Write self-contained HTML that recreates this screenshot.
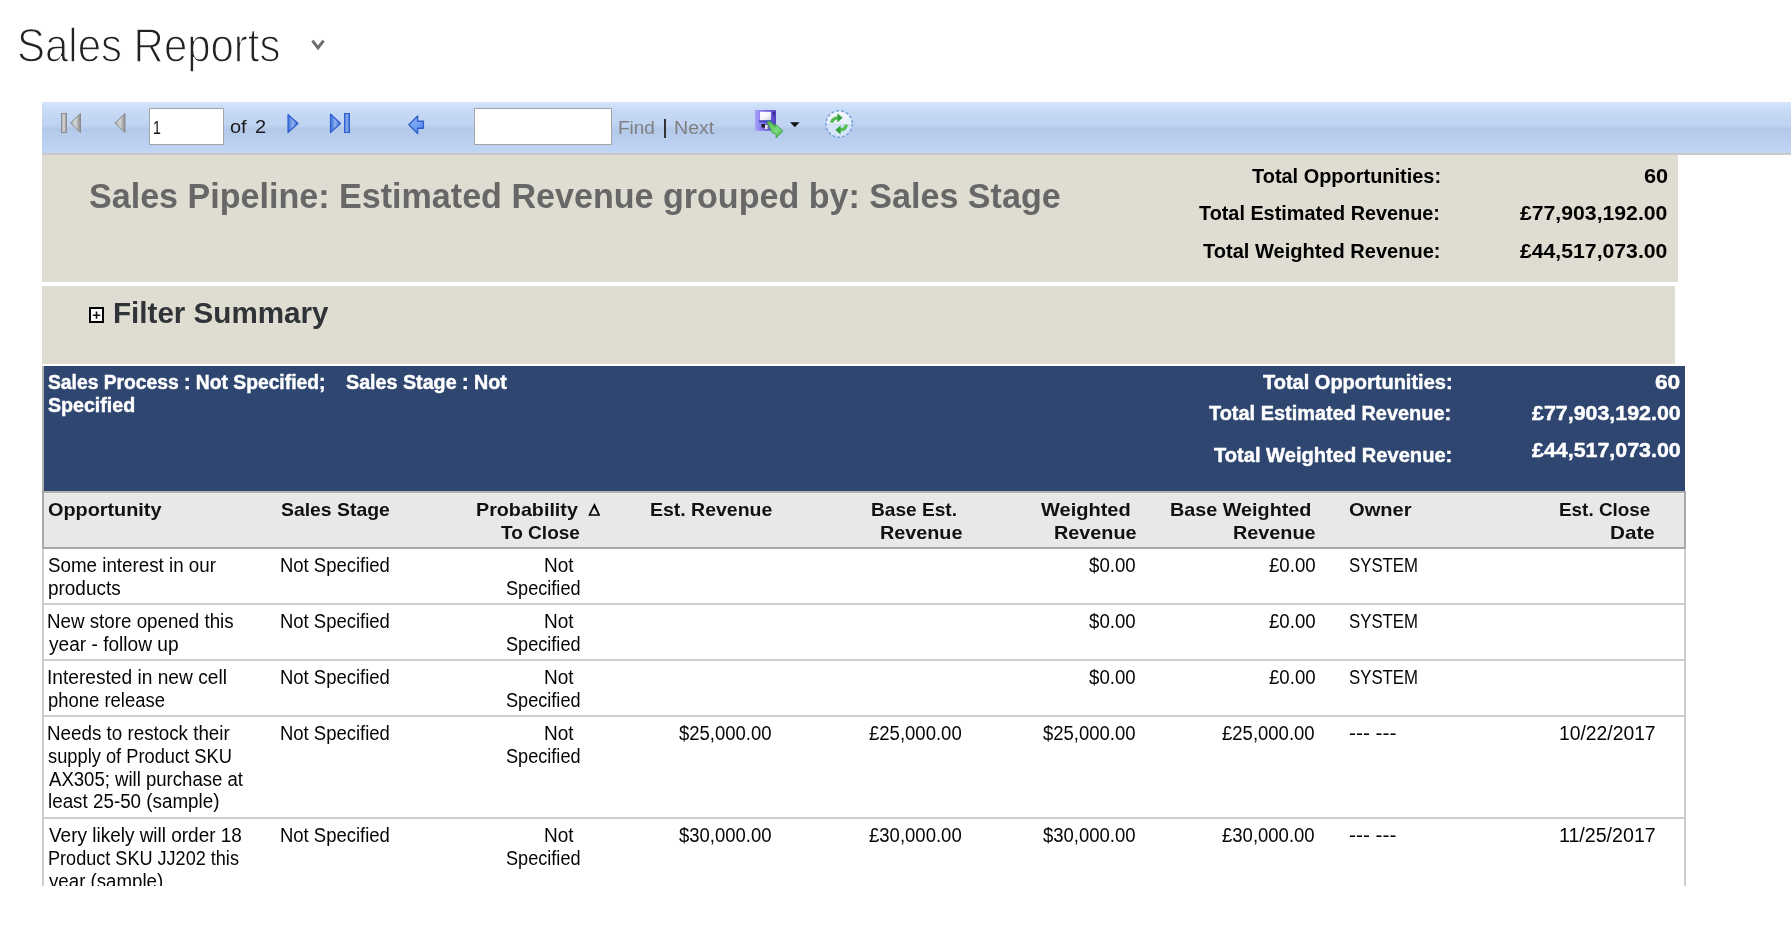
<!DOCTYPE html>
<html><head><meta charset="utf-8">
<style>
html,body{margin:0;padding:0;background:#fff;width:1791px;height:936px;overflow:hidden;position:relative;font-family:"Liberation Sans",sans-serif;}
.a{position:absolute;}
.t{position:absolute;white-space:pre;line-height:1;}
svg{display:block;}
</style></head><body><div class="a" style="left:0;top:0;width:1791px;height:936px;overflow:hidden;will-change:transform;">
<div class="t" style="top:20.77px;font-size:48.5px;color:#222;left:17.45px;transform:scaleX(0.8649);transform-origin:0 0;-webkit-text-stroke:1.4px #fff;">Sales Reports</div>
<svg class="a" style="left:309px;top:37px" width="18" height="16" viewBox="0 0 18 16"><path d="M3.4 3.6 L9 10.8 L14.6 3.6" fill="none" stroke="#6b6b6b" stroke-width="3"/></svg>
<div class="a" style="left:42px;top:102px;width:1749px;height:51px;background:linear-gradient(#d4e5fc 0%,#c6daf6 18%,#bfd3f2 45%,#b9cdee 49%,#b3c8e8 54%,#b6cbec 60%,#bacff0 75%,#c1d6f5 100%);"></div>
<div class="a" style="left:42px;top:153px;width:1749px;height:2px;background:#c8c8c8;"></div>
<svg class="a" style="left:55px;top:108px" width="100" height="32" viewBox="0 0 100 32"><defs><linearGradient id="gg" x1="0" y1="0" x2="1" y2="0"><stop offset="0" stop-color="#a8a8a8"/><stop offset="0.5" stop-color="#d6d6d6"/><stop offset="1" stop-color="#8a8a8a"/></linearGradient></defs><rect x="6.5" y="5.5" width="5" height="19" fill="url(#gg)" stroke="#8c8c8c" stroke-width="1"/><path d="M25.5 5.5 L15.5 15 L25.5 24.5 Z" fill="url(#gg)" stroke="#8c8c8c" stroke-width="1" stroke-linejoin="round"/><path d="M70 5.5 L60 15 L70 24.5 Z" fill="url(#gg)" stroke="#8c8c8c" stroke-width="1" stroke-linejoin="round"/></svg>
<div class="a" style="left:149px;top:108px;width:73px;height:34.5px;background:#fff;border:1px solid #a5a5a5;box-sizing:content-box;"></div>
<div class="t" style="top:118.58px;font-size:18.5px;color:#111;left:152.65px;transform:scaleX(0.7625);transform-origin:0 0;">1</div>
<div class="t" style="top:118.47px;font-size:18.5px;color:#1a1a1a;left:230.49px;transform:scaleX(1.0780);transform-origin:0 0;">of</div>
<div class="t" style="top:118.47px;font-size:18.5px;color:#1a1a1a;left:254.65px;transform:scaleX(1.0824);transform-origin:0 0;">2</div>
<svg class="a" style="left:280px;top:108px" width="160" height="32" viewBox="0 0 160 32"><defs><linearGradient id="ba" x1="0" y1="0" x2="1" y2="1"><stop offset="0" stop-color="#9bbcf5"/><stop offset="0.6" stop-color="#6e9cf2"/><stop offset="1" stop-color="#4a7ae0"/></linearGradient><linearGradient id="bg" x1="0" y1="0" x2="1" y2="0"><stop offset="0" stop-color="#3a6fd8"/><stop offset="0.5" stop-color="#8fb0f0"/><stop offset="1" stop-color="#2d5ec8"/></linearGradient></defs><path d="M8 6.5 L18 15.5 L8 24.5 Z" fill="url(#bg)" stroke="#2f5fd0" stroke-width="1.2" stroke-linejoin="round"/><path d="M50.5 6 L60.5 15.5 L50.5 24.5 Z" fill="url(#bg)" stroke="#2f5fd0" stroke-width="1.2" stroke-linejoin="round"/><rect x="64.5" y="5.5" width="5" height="19" fill="url(#bg)" stroke="#2f5fd0" stroke-width="1"/><path d="M128.9 16.75 L137.6 7.9 L137.6 13.2 L143.4 13.2 L143.4 20.2 L137.6 20.2 L137.6 25.6 Z" fill="url(#ba)" stroke="#3060c8" stroke-width="1.4" stroke-linejoin="round"/></svg>
<div class="a" style="left:474px;top:108px;width:136px;height:34.5px;background:#fff;border:1px solid #a5a5a5;"></div>
<div class="t" style="top:119.08px;font-size:18.5px;color:#808080;left:618.16px;transform:scaleX(1.0256);transform-origin:0 0;">Find</div>
<div class="a" style="left:664px;top:119px;width:2px;height:19px;background:#333;"></div>
<div class="t" style="top:119.08px;font-size:18.5px;color:#808080;left:673.91px;transform:scaleX(1.0584);transform-origin:0 0;">Next</div>
<svg class="a" style="left:750px;top:106px" width="60" height="36" viewBox="0 0 60 36"><defs><linearGradient id="fl" x1="0" y1="0" x2="1" y2="0"><stop offset="0" stop-color="#a8a2fa"/><stop offset="0.5" stop-color="#7668e0"/><stop offset="1" stop-color="#5040c0"/></linearGradient><linearGradient id="lb" x1="0" y1="0" x2="1" y2="1"><stop offset="0" stop-color="#ffffff"/><stop offset="0.6" stop-color="#f4f4f8"/><stop offset="1" stop-color="#c8c8d8"/></linearGradient><linearGradient id="gr" x1="0" y1="0" x2="1" y2="1"><stop offset="0" stop-color="#4fb84f"/><stop offset="0.6" stop-color="#7ddc7d"/><stop offset="1" stop-color="#3a9f3a"/></linearGradient></defs><rect x="5" y="3.9" width="21" height="20.9" rx="0.8" fill="url(#fl)"/><rect x="10" y="5.8" width="11" height="8.4" fill="url(#lb)"/><rect x="9" y="14.5" width="13" height="1.8" fill="#3a48b8"/><rect x="11.5" y="18" width="3.6" height="3.6" fill="#1e2030"/><rect x="15" y="19" width="2.6" height="4" fill="#e6e6ee"/><rect x="23" y="6" width="2" height="2.8" fill="#2e2a90"/><path d="M17.2 16 L19.8 15.2 L25.4 20.6 L25 17.8 L33 25.2 L26 32 L26.2 28.2 L22 26.5 Z" fill="url(#gr)" stroke="#3f9f45" stroke-width="0.9" stroke-linejoin="round"/><path d="M40 16.2 L49.6 16.2 L44.8 21.2 Z" fill="#111"/></svg>
<svg class="a" style="left:822px;top:107px" width="34" height="34" viewBox="0 0 34 34"><defs><linearGradient id="rc" x1="0" y1="0" x2="0" y2="1"><stop offset="0" stop-color="#f6f9fe"/><stop offset="0.5" stop-color="#e6eefb"/><stop offset="0.5" stop-color="#d0e1fa"/><stop offset="1" stop-color="#dce8fb"/></linearGradient></defs><circle cx="17.1" cy="17" r="13.2" fill="url(#rc)" stroke="#7ca2da" stroke-width="1.6" stroke-dasharray="3 1.9"/><path d="M9.6 15.8 Q10.4 10.9 16.2 10.8" fill="none" stroke="#52bb52" stroke-width="3.2"/><path d="M15.4 6.3 L20.6 10.8 L15.4 15.4 Z" fill="#34a03a"/><path d="M24.4 17.4 Q23.6 22.8 18 22.9" fill="none" stroke="#58c458" stroke-width="3.2"/><path d="M18.6 18.4 L13.3 22.9 L18.6 27.5 Z" fill="#34a03a"/></svg>
<div class="a" style="left:42px;top:155px;width:1636px;height:127px;background:#dfddd1;"></div>
<div class="t" style="top:178.25px;font-size:35px;color:#676767;font-weight:bold;left:88.73px;transform:scaleX(0.9738);transform-origin:0 0;">Sales Pipeline: Estimated Revenue grouped by: Sales Stage</div>
<div class="t" style="top:166.00px;font-size:20px;color:#000;font-weight:bold;left:1252.45px;transform:scaleX(0.9969);transform-origin:0 0;">Total Opportunities:</div>
<div class="t" style="top:203.00px;font-size:20px;color:#000;font-weight:bold;left:1199.25px;transform:scaleX(0.9914);transform-origin:0 0;">Total Estimated Revenue:</div>
<div class="t" style="top:241.00px;font-size:20px;color:#000;font-weight:bold;left:1203.25px;transform:scaleX(1.0018);transform-origin:0 0;">Total Weighted Revenue:</div>
<div class="t" style="top:166.00px;font-size:20px;color:#000;font-weight:bold;left:1643.69px;transform:scaleX(1.0861);transform-origin:0 0;">60</div>
<div class="t" style="top:203.00px;font-size:20px;color:#000;font-weight:bold;left:1520.33px;transform:scaleX(1.0601);transform-origin:0 0;">£77,903,192.00</div>
<div class="t" style="top:241.00px;font-size:20px;color:#000;font-weight:bold;left:1520.33px;transform:scaleX(1.0601);transform-origin:0 0;">£44,517,073.00</div>
<div class="a" style="left:42px;top:286px;width:1633px;height:78px;background:#dfddd1;"></div>
<div class="a" style="left:89px;top:307px;width:11px;height:12px;border:2px solid #000;background:#fff;"></div>
<svg class="a" style="left:89px;top:307px" width="16" height="16" viewBox="0 0 16 16"><path d="M3.8 8.2 H11.2 M7.5 4.5 V11.8" stroke="#111" stroke-width="1.6"/></svg>
<div class="t" style="top:299.15px;font-size:29px;color:#303338;font-weight:bold;left:112.56px;transform:scaleX(1.0211);transform-origin:0 0;">Filter Summary</div>
<div class="a" style="left:44px;top:366px;width:1641px;height:125px;background:#2e4670;"></div>
<div class="a" style="left:42px;top:366px;width:2px;height:125px;background:#adadad;"></div>
<div class="t" style="top:372.93px;font-size:19.5px;color:#fff;font-weight:bold;left:47.98px;transform:scaleX(0.9883);transform-origin:0 0;-webkit-text-stroke:0.45px #fff;">Sales Process : Not Specified;</div>
<div class="t" style="top:372.93px;font-size:19.5px;color:#fff;font-weight:bold;left:345.77px;transform:scaleX(1.0101);transform-origin:0 0;-webkit-text-stroke:0.45px #fff;">Sales Stage : Not</div>
<div class="t" style="top:395.93px;font-size:19.5px;color:#fff;font-weight:bold;left:47.97px;transform:scaleX(1.0053);transform-origin:0 0;-webkit-text-stroke:0.45px #fff;">Specified</div>
<div class="t" style="top:371.80px;font-size:20px;color:#fff;font-weight:bold;left:1263.25px;transform:scaleX(0.9996);transform-origin:0 0;-webkit-text-stroke:0.45px #fff;">Total Opportunities:</div>
<div class="t" style="top:402.60px;font-size:20px;color:#fff;font-weight:bold;left:1209.25px;transform:scaleX(0.9964);transform-origin:0 0;-webkit-text-stroke:0.45px #fff;">Total Estimated Revenue:</div>
<div class="t" style="top:444.80px;font-size:20px;color:#fff;font-weight:bold;left:1213.95px;transform:scaleX(1.0052);transform-origin:0 0;-webkit-text-stroke:0.45px #fff;">Total Weighted Revenue:</div>
<div class="t" style="top:371.70px;font-size:20px;color:#fff;font-weight:bold;left:1655.15px;transform:scaleX(1.1345);transform-origin:0 0;-webkit-text-stroke:0.45px #fff;">60</div>
<div class="t" style="top:402.75px;font-size:20px;color:#fff;font-weight:bold;left:1531.53px;transform:scaleX(1.0696);transform-origin:0 0;-webkit-text-stroke:0.45px #fff;">£77,903,192.00</div>
<div class="t" style="top:439.80px;font-size:20px;color:#fff;font-weight:bold;left:1531.53px;transform:scaleX(1.0696);transform-origin:0 0;-webkit-text-stroke:0.45px #fff;">£44,517,073.00</div>
<div class="a" style="left:42px;top:491px;width:1644px;height:58px;background:#e8e8e8;"></div>
<div class="a" style="left:44px;top:493px;width:1640px;height:1px;background:#efefef;"></div>
<div class="a" style="left:42px;top:491px;width:1644px;height:2px;background:#b0b0b0;"></div>
<div class="a" style="left:42px;top:547px;width:1644px;height:2px;background:#a8a8a8;"></div>
<div class="a" style="left:42px;top:491px;width:2px;height:58px;background:#a8a8a8;"></div>
<div class="a" style="left:1684px;top:491px;width:2px;height:58px;background:#a8a8a8;"></div>
<div class="t" style="top:499.85px;font-size:19px;color:#111;font-weight:bold;left:48.22px;transform:scaleX(1.0438);transform-origin:0 0;">Opportunity</div>
<div class="t" style="top:499.85px;font-size:19px;color:#111;font-weight:bold;left:280.56px;transform:scaleX(1.0202);transform-origin:0 0;">Sales Stage</div>
<div class="t" style="top:499.85px;font-size:19px;color:#111;font-weight:bold;left:475.50px;transform:scaleX(1.0374);transform-origin:0 0;">Probability</div>
<div class="t" style="top:522.85px;font-size:19px;color:#111;font-weight:bold;left:501.05px;transform:scaleX(1.0016);transform-origin:0 0;">To Close</div>
<svg class="a" style="left:587px;top:502px" width="15" height="15" viewBox="0 0 15 15"><path fill-rule="evenodd" d="M7.5 0.9 L13.3 13.7 L1.2 13.7 Z M7.1 5.4 L3.8 12.3 L10.9 12.3 Z" fill="#000"/></svg>
<div class="t" style="top:499.85px;font-size:19px;color:#111;font-weight:bold;left:649.72px;transform:scaleX(1.0249);transform-origin:0 0;">Est. Revenue</div>
<div class="t" style="top:499.85px;font-size:19px;color:#111;font-weight:bold;left:870.94px;transform:scaleX(1.0048);transform-origin:0 0;">Base Est.</div>
<div class="t" style="top:522.85px;font-size:19px;color:#111;font-weight:bold;left:879.90px;transform:scaleX(1.0408);transform-origin:0 0;">Revenue</div>
<div class="t" style="top:499.85px;font-size:19px;color:#111;font-weight:bold;left:1041.00px;transform:scaleX(1.0539);transform-origin:0 0;">Weighted</div>
<div class="t" style="top:522.85px;font-size:19px;color:#111;font-weight:bold;left:1053.70px;transform:scaleX(1.0421);transform-origin:0 0;">Revenue</div>
<div class="t" style="top:499.85px;font-size:19px;color:#111;font-weight:bold;left:1170.30px;transform:scaleX(1.0407);transform-origin:0 0;">Base Weighted</div>
<div class="t" style="top:522.85px;font-size:19px;color:#111;font-weight:bold;left:1232.70px;transform:scaleX(1.0421);transform-origin:0 0;">Revenue</div>
<div class="t" style="top:499.85px;font-size:19px;color:#111;font-weight:bold;left:1349.41px;transform:scaleX(1.0581);transform-origin:0 0;">Owner</div>
<div class="t" style="top:499.85px;font-size:19px;color:#111;font-weight:bold;left:1558.56px;transform:scaleX(0.9944);transform-origin:0 0;">Est. Close</div>
<div class="t" style="top:522.85px;font-size:19px;color:#111;font-weight:bold;left:1610.14px;transform:scaleX(1.0879);transform-origin:0 0;">Date</div>
<div class="a" style="left:0;top:549px;width:1791px;height:337px;overflow:hidden;">
<div class="t" style="top:6.94px;font-size:19.6px;color:#050505;left:48.16px;transform:scaleX(0.9578);transform-origin:0 0;">Some interest in our</div>
<div class="t" style="top:29.74px;font-size:19.6px;color:#050505;left:47.79px;transform:scaleX(0.9666);transform-origin:0 0;">products</div>
<div class="t" style="top:6.94px;font-size:19.6px;color:#050505;left:279.67px;transform:scaleX(0.9426);transform-origin:0 0;">Not Specified</div>
<div class="t" style="top:6.94px;font-size:19.6px;color:#050505;left:544.02px;transform:scaleX(0.9704);transform-origin:0 0;">Not</div>
<div class="t" style="top:29.74px;font-size:19.6px;color:#050505;left:505.69px;transform:scaleX(0.9248);transform-origin:0 0;">Specified</div>
<div class="t" style="top:6.94px;font-size:19.6px;color:#050505;left:1089.46px;transform:scaleX(0.9521);transform-origin:0 0;">$0.00</div>
<div class="t" style="top:6.94px;font-size:19.6px;color:#050505;left:1268.52px;transform:scaleX(0.9508);transform-origin:0 0;">£0.00</div>
<div class="t" style="top:6.94px;font-size:19.6px;color:#050505;left:1348.85px;transform:scaleX(0.8563);transform-origin:0 0;">SYSTEM</div>
<div class="a" style="left:42px;top:54px;width:1644px;height:2px;background:#cecece;"></div>
<div class="t" style="top:62.94px;font-size:19.6px;color:#050505;left:47.44px;transform:scaleX(0.9573);transform-origin:0 0;">New store opened this</div>
<div class="t" style="top:85.74px;font-size:19.6px;color:#050505;left:48.88px;transform:scaleX(0.9750);transform-origin:0 0;">year - follow up</div>
<div class="t" style="top:62.94px;font-size:19.6px;color:#050505;left:279.67px;transform:scaleX(0.9426);transform-origin:0 0;">Not Specified</div>
<div class="t" style="top:62.94px;font-size:19.6px;color:#050505;left:544.02px;transform:scaleX(0.9704);transform-origin:0 0;">Not</div>
<div class="t" style="top:85.74px;font-size:19.6px;color:#050505;left:505.69px;transform:scaleX(0.9248);transform-origin:0 0;">Specified</div>
<div class="t" style="top:62.94px;font-size:19.6px;color:#050505;left:1089.46px;transform:scaleX(0.9521);transform-origin:0 0;">$0.00</div>
<div class="t" style="top:62.94px;font-size:19.6px;color:#050505;left:1268.52px;transform:scaleX(0.9508);transform-origin:0 0;">£0.00</div>
<div class="t" style="top:62.94px;font-size:19.6px;color:#050505;left:1348.85px;transform:scaleX(0.8563);transform-origin:0 0;">SYSTEM</div>
<div class="a" style="left:42px;top:110px;width:1644px;height:2px;background:#cecece;"></div>
<div class="t" style="top:118.94px;font-size:19.6px;color:#050505;left:47.29px;transform:scaleX(0.9773);transform-origin:0 0;">Interested in new cell</div>
<div class="t" style="top:141.74px;font-size:19.6px;color:#050505;left:47.82px;transform:scaleX(0.9417);transform-origin:0 0;">phone release</div>
<div class="t" style="top:118.94px;font-size:19.6px;color:#050505;left:279.67px;transform:scaleX(0.9426);transform-origin:0 0;">Not Specified</div>
<div class="t" style="top:118.94px;font-size:19.6px;color:#050505;left:544.02px;transform:scaleX(0.9704);transform-origin:0 0;">Not</div>
<div class="t" style="top:141.74px;font-size:19.6px;color:#050505;left:505.69px;transform:scaleX(0.9248);transform-origin:0 0;">Specified</div>
<div class="t" style="top:118.94px;font-size:19.6px;color:#050505;left:1089.46px;transform:scaleX(0.9521);transform-origin:0 0;">$0.00</div>
<div class="t" style="top:118.94px;font-size:19.6px;color:#050505;left:1268.52px;transform:scaleX(0.9508);transform-origin:0 0;">£0.00</div>
<div class="t" style="top:118.94px;font-size:19.6px;color:#050505;left:1348.85px;transform:scaleX(0.8563);transform-origin:0 0;">SYSTEM</div>
<div class="a" style="left:42px;top:166px;width:1644px;height:2px;background:#cecece;"></div>
<div class="t" style="top:174.94px;font-size:19.6px;color:#050505;left:47.44px;transform:scaleX(0.9589);transform-origin:0 0;">Needs to restock their</div>
<div class="t" style="top:197.74px;font-size:19.6px;color:#050505;left:48.42px;transform:scaleX(0.9328);transform-origin:0 0;">supply of Product SKU</div>
<div class="t" style="top:220.54px;font-size:19.6px;color:#050505;left:48.88px;transform:scaleX(0.9472);transform-origin:0 0;">AX305; will purchase at</div>
<div class="t" style="top:243.34px;font-size:19.6px;color:#050505;left:47.68px;transform:scaleX(0.9602);transform-origin:0 0;">least 25-50 (sample)</div>
<div class="t" style="top:174.94px;font-size:19.6px;color:#050505;left:279.67px;transform:scaleX(0.9426);transform-origin:0 0;">Not Specified</div>
<div class="t" style="top:174.94px;font-size:19.6px;color:#050505;left:544.02px;transform:scaleX(0.9704);transform-origin:0 0;">Not</div>
<div class="t" style="top:197.74px;font-size:19.6px;color:#050505;left:505.69px;transform:scaleX(0.9248);transform-origin:0 0;">Specified</div>
<div class="t" style="top:174.94px;font-size:19.6px;color:#050505;left:679.36px;transform:scaleX(0.9431);transform-origin:0 0;">$25,000.00</div>
<div class="t" style="top:174.94px;font-size:19.6px;color:#050505;left:868.93px;transform:scaleX(0.9455);transform-origin:0 0;">£25,000.00</div>
<div class="t" style="top:174.94px;font-size:19.6px;color:#050505;left:1043.46px;transform:scaleX(0.9441);transform-origin:0 0;">$25,000.00</div>
<div class="t" style="top:174.94px;font-size:19.6px;color:#050505;left:1222.43px;transform:scaleX(0.9445);transform-origin:0 0;">£25,000.00</div>
<div class="t" style="top:174.94px;font-size:19.6px;color:#050505;left:1349.07px;transform:scaleX(1.0636);transform-origin:0 0;">--- ---</div>
<div class="t" style="top:174.94px;font-size:19.6px;color:#050505;left:1558.52px;transform:scaleX(0.9851);transform-origin:0 0;">10/22/2017</div>
<div class="a" style="left:42px;top:268px;width:1644px;height:2px;background:#cecece;"></div>
<div class="t" style="top:276.94px;font-size:19.6px;color:#050505;left:48.88px;transform:scaleX(0.9679);transform-origin:0 0;">Very likely will order 18</div>
<div class="t" style="top:299.74px;font-size:19.6px;color:#050505;left:47.50px;transform:scaleX(0.9227);transform-origin:0 0;">Product SKU JJ202 this</div>
<div class="t" style="top:322.54px;font-size:19.6px;color:#050505;left:48.88px;transform:scaleX(0.9536);transform-origin:0 0;">year (sample)</div>
<div class="t" style="top:276.94px;font-size:19.6px;color:#050505;left:279.67px;transform:scaleX(0.9426);transform-origin:0 0;">Not Specified</div>
<div class="t" style="top:276.94px;font-size:19.6px;color:#050505;left:544.02px;transform:scaleX(0.9704);transform-origin:0 0;">Not</div>
<div class="t" style="top:299.74px;font-size:19.6px;color:#050505;left:505.69px;transform:scaleX(0.9248);transform-origin:0 0;">Specified</div>
<div class="t" style="top:276.94px;font-size:19.6px;color:#050505;left:679.36px;transform:scaleX(0.9431);transform-origin:0 0;">$30,000.00</div>
<div class="t" style="top:276.94px;font-size:19.6px;color:#050505;left:868.93px;transform:scaleX(0.9455);transform-origin:0 0;">£30,000.00</div>
<div class="t" style="top:276.94px;font-size:19.6px;color:#050505;left:1043.46px;transform:scaleX(0.9441);transform-origin:0 0;">$30,000.00</div>
<div class="t" style="top:276.94px;font-size:19.6px;color:#050505;left:1222.43px;transform:scaleX(0.9445);transform-origin:0 0;">£30,000.00</div>
<div class="t" style="top:276.94px;font-size:19.6px;color:#050505;left:1349.07px;transform:scaleX(1.0636);transform-origin:0 0;">--- ---</div>
<div class="t" style="top:276.94px;font-size:19.6px;color:#050505;left:1558.50px;transform:scaleX(1.0008);transform-origin:0 0;">11/25/2017</div>
<div class="a" style="left:42px;top:370px;width:1644px;height:2px;background:#cecece;"></div>
<div class="a" style="left:42px;top:0px;width:2px;height:400px;background:#cecece;"></div>
<div class="a" style="left:1684px;top:0px;width:2px;height:400px;background:#cecece;"></div>
</div>
</div></body></html>
